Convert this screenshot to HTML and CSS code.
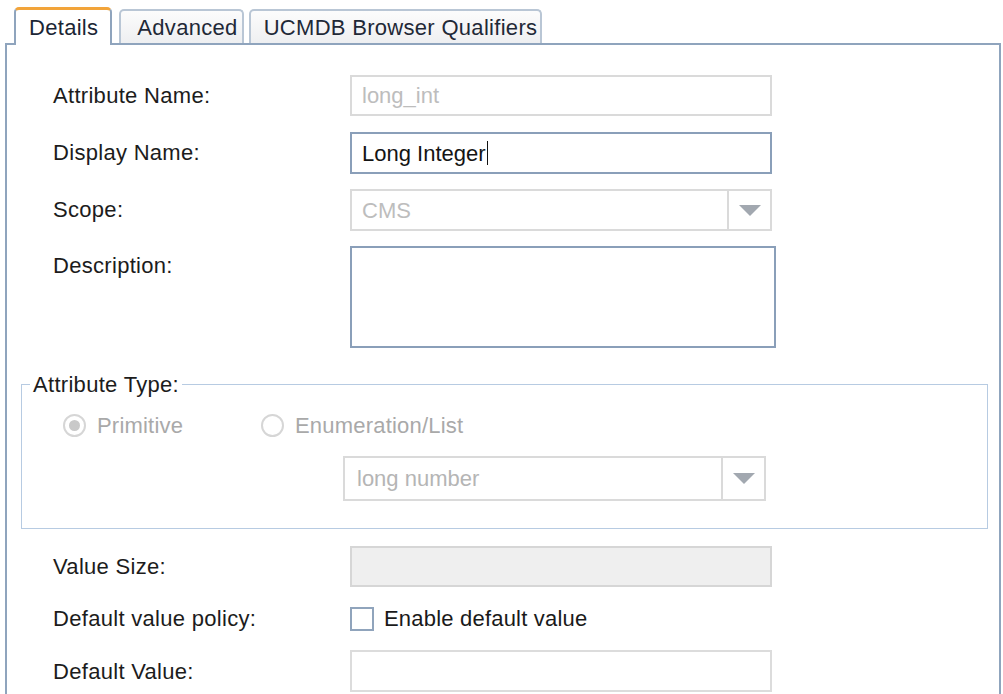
FILE: index.html
```html
<!DOCTYPE html>
<html lang="en">
<head>
<meta charset="utf-8">
<title>Attribute Details</title>
<link rel="stylesheet" href="styles.css">
</head>
<body>
<div class="dialog">
  <div class="tabs">
    <div class="tab tab-details active">Details</div>
    <div class="tab tab-advanced">Advanced</div>
    <div class="tab tab-ucmdb">UCMDB Browser Qualifiers</div>
  </div>
  <div class="panel">
    <div class="form form-top">
      <div class="label">Attribute Name:</div>
      <div class="field field-disabled"><span class="muted">long_int</span></div>

      <div class="label">Display Name:</div>
      <div class="field field-focused"><span>Long Integer</span><span class="caret"></span></div>

      <div class="label">Scope:</div>
      <div class="select select-disabled">
        <span class="select-value muted">CMS</span>
        <span class="select-btn"><span class="arrow"></span></span>
      </div>

      <div class="label label-top">Description:</div>
      <div class="textarea"></div>
    </div>

    <fieldset class="group">
      <legend class="group-title">Attribute Type:</legend>
      <div class="group-body">
        <div class="radios">
          <div class="radio-option">
            <span class="radio radio-checked"></span>
            <span class="radio-label">Primitive</span>
          </div>
          <div class="radio-option">
            <span class="radio"></span>
            <span class="radio-label">Enumeration/List</span>
          </div>
        </div>
        <div class="select select-type select-disabled">
          <span class="select-value select-value-type muted">long number</span>
          <span class="select-btn"><span class="arrow"></span></span>
        </div>
      </div>
    </fieldset>

    <div class="form form-bottom">
      <div class="label">Value Size:</div>
      <div class="field field-gray"></div>

      <div class="label">Default value policy:</div>
      <div class="check-row">
        <span class="checkbox"></span>
        <span class="check-label">Enable default value</span>
      </div>

      <div class="label">Default Value:</div>
      <div class="field field-plain"></div>
    </div>
  </div>
</div>
</body>
</html>
```

FILE: styles.css
```css
* {
  box-sizing: border-box;
}

html, body {
  margin: 0;
  padding: 0;
  background: #ffffff;
}

body {
  height: 694px;
  overflow: hidden;
  font-family: "Liberation Sans", Arial, sans-serif;
  font-size: 22px;
  line-height: 25px;
  color: #1c1c1c;
}

.dialog {
  height: 100%;
  display: flex;
  flex-direction: column;
  padding: 7px 2px 0 5px;
}

/* ---------- tabs ---------- */
.tabs {
  display: flex;
  align-items: flex-end;
  padding-left: 9px;
}

.tab {
  height: 34px;
  display: flex;
  align-items: center;
  border: 2px solid #b9c6d5;
  border-bottom: none;
  border-radius: 5px 5px 0 0;
  background: linear-gradient(#fcfcfc, #eeeff1);
  color: #1f2937;
  white-space: nowrap;
  letter-spacing: 0.3px;
}

.tab-details {
  padding: 0 12px 0 13px;
  margin-right: 7px;
}

.tab-advanced {
  padding: 0 4px 0 16px;
  margin-right: 5px;
}

.tab-ucmdb {
  padding: 0 3px 0 13px;
}

.tab.active {
  height: 38px;
  margin-bottom: -2px;
  position: relative;
  z-index: 1;
  background: #ffffff;
  border-color: #8fa4bd;
  border-top: 3px solid #f2a43a;
  color: #1b2635;
}

/* ---------- panel ---------- */
.panel {
  flex: 1;
  border: 2px solid #8fa4bd;
  border-bottom: none;
  background: #ffffff;
}

.form {
  display: grid;
  grid-template-columns: 297px 426px;
  padding-left: 46px;
}

.form-top {
  padding-top: 30px;
  grid-template-rows: 41px 41px 41px 102px;
  row-gap: 16px;
}

.form-bottom {
  margin-top: 17px;
  grid-template-rows: 41px 41px 42px;
  row-gap: 11px;
}

.label {
  align-self: center;
  white-space: nowrap;
  color: #1c1c1c;
  letter-spacing: 0.3px;
}

.label-top {
  align-self: start;
  padding-top: 7px;
}

.field {
  width: 422px;
  height: 41px;
  display: flex;
  align-items: center;
  padding-left: 10px;
  border: 2px solid #dadada;
  background: #ffffff;
}

.field-focused {
  height: 42px;
  border-color: #8a9fb9;
  color: #141414;
}

.caret {
  display: inline-block;
  width: 1px;
  height: 24px;
  margin-left: 1px;
  background: #111111;
}

.field-gray {
  background: #efefef;
  border-color: #d6d6d6;
}

.field-plain {
  height: 42px;
  border-color: #dcdcdc;
}

.muted {
  color: #bdbdbd;
}

.select {
  width: 422px;
  height: 42px;
  display: flex;
  border: 2px solid #dadada;
  background: #ffffff;
}

.select-value {
  flex: 1;
  display: flex;
  align-items: center;
  padding-left: 10px;
}

.select-btn {
  width: 43px;
  display: flex;
  align-items: center;
  justify-content: center;
  border-left: 2px solid #dadada;
}

.arrow {
  width: 0;
  height: 0;
  border-left: 11px solid transparent;
  border-right: 11px solid transparent;
  border-top: 11px solid #a2a8b0;
}

.textarea {
  width: 426px;
  height: 102px;
  border: 2px solid #8a9fb9;
  background: #ffffff;
}

/* ---------- group box ---------- */
.group {
  margin: 24px 11px 0 14px;
  padding: 0;
  border: 1px solid #b7cbe2;
  min-width: 0;
}

.group-title {
  margin-left: 8px;
  padding: 0 3px;
  color: #1c1c1c;
  letter-spacing: 0.3px;
}

.group-body {
  padding: 16px 0 27px 41px;
}

.radios {
  display: flex;
  align-items: center;
  height: 24px;
}

.radio-option {
  width: 198px;
  display: flex;
  align-items: center;
}

.radio {
  width: 23px;
  height: 23px;
  border-radius: 50%;
  border: 2px solid #d6d6d6;
  background: #ffffff;
  display: flex;
  align-items: center;
  justify-content: center;
  margin-right: 11px;
  flex-shrink: 0;
}

.radio-checked::after {
  content: "";
  width: 11px;
  height: 11px;
  border-radius: 50%;
  background: #c9c9c9;
}

.radio-label {
  color: #a9a9a9;
  white-space: nowrap;
  letter-spacing: 0.2px;
}

.select-type {
  width: 423px;
  height: 45px;
  margin: 19px 0 0 280px;
}

.select-value-type {
  padding-left: 12px;
  color: #b5b5b5;
}

/* ---------- checkbox ---------- */
.check-row {
  display: flex;
  align-items: center;
}

.checkbox {
  width: 24px;
  height: 24px;
  border: 2px solid #90a4bc;
  background: #ffffff;
  margin-right: 10px;
}

.check-label {
  color: #1a1a1a;
  white-space: nowrap;
  letter-spacing: 0.2px;
}
```
